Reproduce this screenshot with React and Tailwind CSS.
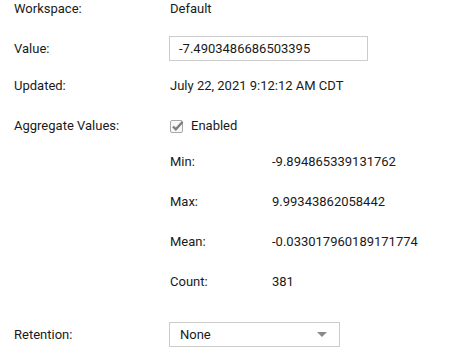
import React from 'react';

const Row = ({ label, className = '', children }) => (
  <div className={`flex items-center ${className}`}>
    <div className="w-[156px] shrink-0">{label}</div>
    <div className="flex items-center">{children}</div>
  </div>
);

const Stat = ({ label, value, className = '' }) => (
  <div className={`flex items-center h-[20px] pl-[156px] ${className}`}>
    <div className="w-[102px] shrink-0">{label}</div>
    <div>{value}</div>
  </div>
);

const App = () => {
  return (
    <div className="w-[469px] h-[356px] bg-white pl-[14px] text-[13px] text-[#1a1a1a] font-['Roboto',sans-serif] overflow-hidden">
      <Row label="Workspace:" className="h-[18px]">
        Default
      </Row>
      <Row label="Value:" className="mt-[18px] h-[25px]">
        <input
          type="text"
          defaultValue="-7.4903486686503395"
          className="w-[199px] h-[25px] -ml-[1px] border border-[#cccccc] px-[9px] text-[13px] text-[#1a1a1a] outline-none"
        />
      </Row>
      <Row label="Updated:" className="mt-[15px] h-[20px]">
        July 22, 2021 9:12:12 AM CDT
      </Row>
      <Row label="Aggregate Values:" className="mt-[20px] h-[20px]">
        <svg width="15" height="15" viewBox="0 0 15 15" className="mr-[6px]">
          <rect x="0.5" y="1.5" width="12" height="12" rx="1.5" fill="#f7f7f7" stroke="#a8a8a8" />
          <path d="M3 7.5 L5.8 10.3 L12.5 3" fill="none" stroke="#7d7d7d" strokeWidth="2.4" />
        </svg>
        Enabled
      </Row>
      <Stat label="Min:" value="-9.894865339131762" className="mt-[16px]" />
      <Stat label="Max:" value="9.99343862058442" className="mt-[20px]" />
      <Stat label="Mean:" value="-0.033017960189171774" className="mt-[20px]" />
      <Stat label="Count:" value="381" className="mt-[20px]" />
      <Row label="Retention:" className="mt-[30px] h-[25px]">
        <div className="w-[171px] h-[25px] -ml-[1px] border border-[#cccccc] flex items-center justify-between pl-[10px] pr-[12px]">
          <span>None</span>
          <svg width="10" height="5" viewBox="0 0 10 5">
            <path d="M0 0 L10 0 L5 5 Z" fill="#8a8a8a" />
          </svg>
        </div>
      </Row>
    </div>
  );
};

export default App;
